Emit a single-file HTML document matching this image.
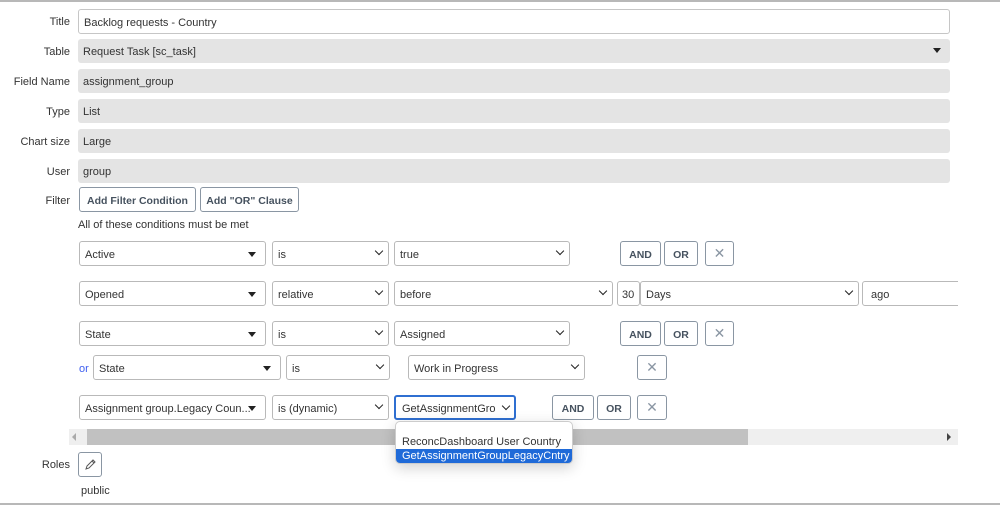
<!DOCTYPE html><html><head><style>
*{box-sizing:border-box;margin:0;padding:0}
body{width:1000px;height:505px;background:#fff;font-family:"Liberation Sans",sans-serif;font-size:11px;color:#333;position:relative;overflow:hidden}
.a{position:absolute}
.lbl{position:absolute;right:930px;text-align:right;white-space:nowrap}
.ro{position:absolute;left:78px;width:872px;height:24px;background:#e4e4e4;border-radius:3px;padding:7px 5px}
.sel{position:absolute;height:25px;border:1px solid #b9b9b9;border-radius:3px;background:#fff;padding:7px 5px;white-space:nowrap;overflow:hidden}
.sel .ch{position:absolute;right:6px;top:6px;width:6px;height:6px;border-right:1.6px solid #222;border-bottom:1.6px solid #222;transform:rotate(45deg)}
.sel .tr{position:absolute;right:9px;top:10px;border-left:4px solid transparent;border-right:4px solid transparent;border-top:5px solid #222}
.btn{position:absolute;height:25px;border:1px solid #8a96a3;border-radius:3px;background:#fff;font-weight:bold;color:#46525f;text-align:center;padding-top:7px;font-size:10.5px}
.x{font-weight:normal;color:#8a96a3;font-size:14px;padding-top:3px}
</style></head><body>
<div class="a" style="left:0;top:0;width:1000px;height:2px;background:#b8b8b8"></div>
<div class="a" style="left:0;top:503px;width:1000px;height:2px;background:#b8b8b8"></div>

<div class="lbl" style="top:16px">Title</div>
<div class="a" style="left:78px;top:9px;width:872px;height:25px;border:1px solid #c6c6c6;border-radius:3px;padding:7px 5px">Backlog requests - Country</div>
<div class="lbl" style="top:46px">Table</div>
<div class="ro" style="top:39px">Request Task [sc_task]<span class="a" style="right:9px;top:9px;border-left:4px solid transparent;border-right:4px solid transparent;border-top:5px solid #222"></span></div>
<div class="lbl" style="top:76px">Field Name</div>
<div class="ro" style="top:69px">assignment_group</div>
<div class="lbl" style="top:106px">Type</div>
<div class="ro" style="top:99px">List</div>
<div class="lbl" style="top:136px">Chart size</div>
<div class="ro" style="top:129px">Large</div>
<div class="lbl" style="top:166px">User</div>
<div class="ro" style="top:159px">group</div>
<div class="lbl" style="top:195px">Filter</div>
<div class="btn" style="left:79px;top:187px;width:117px">Add Filter Condition</div>
<div class="btn" style="left:200px;top:187px;width:99px">Add "OR" Clause</div>
<div class="a" style="left:78px;top:219px">All of these conditions must be met</div>

<div class="sel" style="left:79px;top:241px;width:187px">Active<span class="tr"></span></div>
<div class="sel" style="left:272px;top:241px;width:117px">is<span class="ch"></span></div>
<div class="sel" style="left:394px;top:241px;width:176px">true<span class="ch"></span></div>
<div class="btn" style="left:620px;top:241px;width:41px">AND</div>
<div class="btn" style="left:664px;top:241px;width:34px">OR</div>
<div class="btn x" style="left:705px;top:241px;width:29px">✕</div>

<div class="sel" style="left:79px;top:281px;width:187px">Opened<span class="tr"></span></div>
<div class="sel" style="left:272px;top:281px;width:117px">relative<span class="ch"></span></div>
<div class="sel" style="left:394px;top:281px;width:219px">before<span class="ch"></span></div>
<div class="sel" style="left:617px;top:281px;width:23px;padding-left:4px">30</div>
<div class="sel" style="left:640px;top:281px;width:219px">Days<span class="ch"></span></div>
<div class="sel" style="left:862px;top:281px;width:100px;padding-left:8px">ago</div>
<div class="a" style="left:958px;top:270px;width:42px;height:40px;background:#fff"></div>

<div class="sel" style="left:79px;top:321px;width:187px">State<span class="tr"></span></div>
<div class="sel" style="left:272px;top:321px;width:117px">is<span class="ch"></span></div>
<div class="sel" style="left:394px;top:321px;width:176px">Assigned<span class="ch"></span></div>
<div class="btn" style="left:620px;top:321px;width:41px">AND</div>
<div class="btn" style="left:664px;top:321px;width:34px">OR</div>
<div class="btn x" style="left:705px;top:321px;width:29px">✕</div>

<div class="a" style="left:79px;top:363px;color:#3f5ff0">or</div>
<div class="sel" style="left:93px;top:355px;width:188px">State<span class="tr"></span></div>
<div class="sel" style="left:286px;top:355px;width:104px">is<span class="ch"></span></div>
<div class="sel" style="left:408px;top:355px;width:177px">Work in Progress<span class="ch"></span></div>
<div class="btn x" style="left:637px;top:355px;width:30px">✕</div>

<div class="sel" style="left:79px;top:395px;width:187px">Assignment group.Legacy Coun...<span class="tr"></span></div>
<div class="sel" style="left:272px;top:395px;width:117px">is (dynamic)<span class="ch"></span></div>
<div class="sel" style="left:394px;top:395px;width:122px;border:2px solid #2f6fd1;padding:6px 6px">GetAssignmentGro<span class="ch" style="right:5px"></span></div>
<div class="btn" style="left:552px;top:395px;width:42px">AND</div>
<div class="btn" style="left:597px;top:395px;width:34px">OR</div>
<div class="btn x" style="left:637px;top:395px;width:30px">✕</div>

<div class="a" style="left:69px;top:429px;width:889px;height:16px;background:#efefef"></div>
<div class="a" style="left:87px;top:429px;width:661px;height:16px;background:#c1c1c1"></div>
<div class="a" style="left:72px;top:433px;border-top:4px solid transparent;border-bottom:4px solid transparent;border-right:4px solid #aaa"></div>
<div class="a" style="left:947px;top:433px;border-top:4px solid transparent;border-bottom:4px solid transparent;border-left:4px solid #444"></div>

<div class="a" style="left:395px;top:421px;width:178px;height:43px;background:#fff;border:1px solid #ccc;border-radius:5px;box-shadow:0 4px 14px rgba(0,0,0,.18);overflow:hidden">
<div class="a" style="left:6px;top:14px;white-space:nowrap">ReconcDashboard User Country</div>
<div class="a" style="left:0;top:27px;width:178px;height:15px;background:#1f6ad8;color:#fff;padding:1px 6px;white-space:nowrap">GetAssignmentGroupLegacyCntry</div>
</div>

<div class="lbl" style="top:459px">Roles</div>
<div class="a" style="left:78px;top:452px;width:24px;height:25px;border:1px solid #8a96a3;border-radius:3px">
<svg width="22" height="23" viewBox="0 0 22 23"><path d="M7 16 L8 13 L14 7 L16 9 L10 15 Z M13 8 L15 10" fill="none" stroke="#555" stroke-width="1"/></svg></div>
<div class="a" style="left:81px;top:485px">public</div>
</body></html>
